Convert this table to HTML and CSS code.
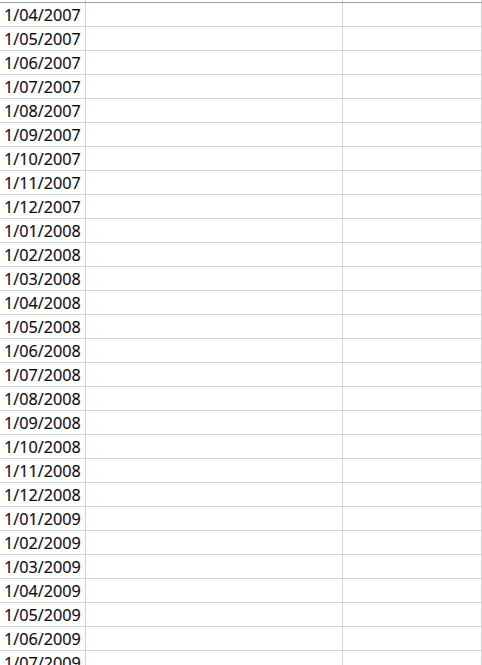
FILE: index.html
```html
<!DOCTYPE html>
<html>
<head>
<meta charset="utf-8">
<link rel="stylesheet" href="styles.css">
</head>
<body>
<div class="sheet">
  <div class="row head"><div class="cell"></div><div class="cell"></div><div class="cell"></div></div>
  <div class="row"><div class="cell date">1/04/2007</div><div class="cell"></div><div class="cell"></div></div>
  <div class="row"><div class="cell date">1/05/2007</div><div class="cell"></div><div class="cell"></div></div>
  <div class="row"><div class="cell date">1/06/2007</div><div class="cell"></div><div class="cell"></div></div>
  <div class="row"><div class="cell date">1/07/2007</div><div class="cell"></div><div class="cell"></div></div>
  <div class="row"><div class="cell date">1/08/2007</div><div class="cell"></div><div class="cell"></div></div>
  <div class="row"><div class="cell date">1/09/2007</div><div class="cell"></div><div class="cell"></div></div>
  <div class="row"><div class="cell date">1/10/2007</div><div class="cell"></div><div class="cell"></div></div>
  <div class="row"><div class="cell date">1/11/2007</div><div class="cell"></div><div class="cell"></div></div>
  <div class="row"><div class="cell date">1/12/2007</div><div class="cell"></div><div class="cell"></div></div>
  <div class="row"><div class="cell date">1/01/2008</div><div class="cell"></div><div class="cell"></div></div>
  <div class="row"><div class="cell date">1/02/2008</div><div class="cell"></div><div class="cell"></div></div>
  <div class="row"><div class="cell date">1/03/2008</div><div class="cell"></div><div class="cell"></div></div>
  <div class="row"><div class="cell date">1/04/2008</div><div class="cell"></div><div class="cell"></div></div>
  <div class="row"><div class="cell date">1/05/2008</div><div class="cell"></div><div class="cell"></div></div>
  <div class="row"><div class="cell date">1/06/2008</div><div class="cell"></div><div class="cell"></div></div>
  <div class="row"><div class="cell date">1/07/2008</div><div class="cell"></div><div class="cell"></div></div>
  <div class="row"><div class="cell date">1/08/2008</div><div class="cell"></div><div class="cell"></div></div>
  <div class="row"><div class="cell date">1/09/2008</div><div class="cell"></div><div class="cell"></div></div>
  <div class="row"><div class="cell date">1/10/2008</div><div class="cell"></div><div class="cell"></div></div>
  <div class="row"><div class="cell date">1/11/2008</div><div class="cell"></div><div class="cell"></div></div>
  <div class="row"><div class="cell date">1/12/2008</div><div class="cell"></div><div class="cell"></div></div>
  <div class="row"><div class="cell date">1/01/2009</div><div class="cell"></div><div class="cell"></div></div>
  <div class="row"><div class="cell date">1/02/2009</div><div class="cell"></div><div class="cell"></div></div>
  <div class="row"><div class="cell date">1/03/2009</div><div class="cell"></div><div class="cell"></div></div>
  <div class="row"><div class="cell date">1/04/2009</div><div class="cell"></div><div class="cell"></div></div>
  <div class="row"><div class="cell date">1/05/2009</div><div class="cell"></div><div class="cell"></div></div>
  <div class="row"><div class="cell date">1/06/2009</div><div class="cell"></div><div class="cell"></div></div>
  <div class="row"><div class="cell date">1/07/2009</div><div class="cell"></div><div class="cell"></div></div>
</div>
</body>
</html>
```
FILE: styles.css
```css
html, body {
  margin: 0;
  padding: 0;
  background: #ffffff;
  overflow: hidden;
}
.sheet {
  width: 482px;
  height: 665px;
  overflow: hidden;
  font-family: "Open Sans", "Noto Sans", sans-serif;
  font-size: 16.2px;
  color: #0a0a14;
}
.row {
  display: grid;
  grid-template-columns: 86px 257px 1fr;
  height: 24px;
  box-sizing: border-box;
  border-bottom: 1px solid #d4d4d4;
}
.row.head {
  height: 3px;
  border-bottom: 1px solid #9e9e9e;
}
.cell {
  border-right: 1px solid #d4d4d4;
  box-sizing: border-box;
  overflow: hidden;
  white-space: nowrap;
}
.date {
  padding-left: 4px;
  padding-top: 1px;
  line-height: 23px;
  -webkit-text-stroke: 0.2px #0a0a14;
}
```
